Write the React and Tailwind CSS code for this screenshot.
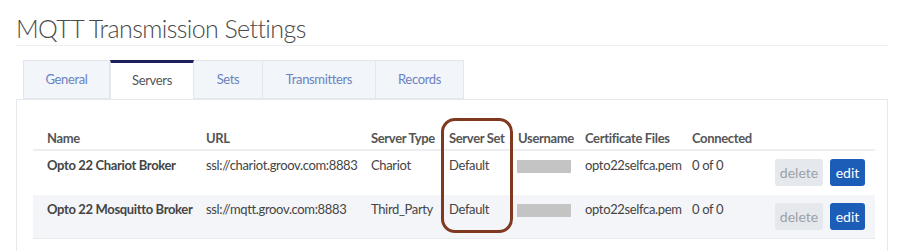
import React from "react";

const tabs = [
  { label: "General", w: "w-[87px]" },
  { label: "Servers", w: "w-[84px]", active: true },
  { label: "Sets", w: "w-[69px]" },
  { label: "Transmitters", w: "w-[113px]" },
  { label: "Records", w: "w-[88px]" },
];

const servers = [
  { name: "Opto 22 Chariot Broker", url: "ssl://chariot.groov.com:8883", type: "Chariot" },
  { name: "Opto 22 Mosquitto Broker", url: "ssl://mqtt.groov.com:8883", type: "Third_Party" },
];

const cols = "grid grid-cols-[159px_165px_78px_69px_67px_107px_1fr_auto]";

export default function App() {
  return (
    <div
      className="relative w-[900px] h-[251px] overflow-hidden bg-white text-[13px] tracking-[-0.35px] text-[#444]"
      style={{ fontFamily: "Lato, 'Open Sans', sans-serif" }}
    >
      <div className="pl-[16px] w-[888px]">
        <h1 className="pt-[14px] h-[45px] text-[25px] font-light leading-[28px] tracking-[-0.6px] text-[#4a4a4a]">
          MQTT Transmission Settings
        </h1>
        <div className="border-t border-[#eeeff1]" />

        <div className="flex pl-[7px] mt-[14px]">
          {tabs.map((t) => (
            <div
              key={t.label}
              className={
                t.active
                  ? `${t.w} h-[39px] flex items-center justify-center bg-white border-t-[3px] border-t-[#1d1f5c] border-x border-x-[#e3e6ea] text-[#555] -mb-px relative z-10`
                  : `${t.w} h-[39px] flex items-center justify-center bg-[#f2f5f9] border border-[#e3e6ea] border-l-0 first:border-l text-[#6a82c0]`
              }
            >
              {t.label}
            </div>
          ))}
        </div>

        <div className="border border-[#e6e8eb] h-[160px] pt-[25px] pl-[16px] pr-[12px]">
          <div className={`${cols} pl-[14px] pr-[10px] h-[26px] pt-[4px] items-center font-bold text-[#555] border-b-2 border-[#eceef1]`}>
            <div>Name</div>
            <div>URL</div>
            <div>Server Type</div>
            <div>Server Set</div>
            <div>Username</div>
            <div>Certificate Files</div>
            <div>Connected</div>
            <div />
          </div>
          {servers.map((s, i) => (
            <div
              key={s.name}
              className={`${cols} pl-[14px] pr-[10px] h-[44px] pt-[5px] ${
                i === 1 ? "bg-[#f4f5f8] border-b border-[#e8eaed]" : ""
              }`}
            >
              <div className="font-bold text-[#444] leading-[16px] pt-[1px]">{s.name}</div>
              <div className="leading-[16px] pt-[1px]">{s.url}</div>
              <div className="leading-[16px] pt-[1px]">{s.type}</div>
              <div className="leading-[16px] pt-[1px]">Default</div>
              <div className="pt-[4px]">
                <div className="w-[54px] h-[13px] bg-[#c4c4c4] -ml-[1px]" />
              </div>
              <div className="leading-[16px] pt-[1px]">opto22selfca.pem</div>
              <div className="leading-[16px] pt-[1px]">0 of 0</div>
              <div className="flex gap-[7px] pt-[3px]">
                <button className="w-[48px] h-[27px] rounded-[3px] bg-[#e5e8ec] text-[14px] tracking-normal text-[#9ba1a8]">
                  delete
                </button>
                <button className="w-[35px] h-[27px] rounded-[3px] bg-[#1c5db8] text-[14px] tracking-normal text-white">
                  edit
                </button>
              </div>
            </div>
          ))}
        </div>
      </div>

      <div className="absolute left-[441px] top-[118px] w-[72px] h-[115px] rounded-[14px] border-[3px] border-[#80391f] pointer-events-none" />
    </div>
  );
}
